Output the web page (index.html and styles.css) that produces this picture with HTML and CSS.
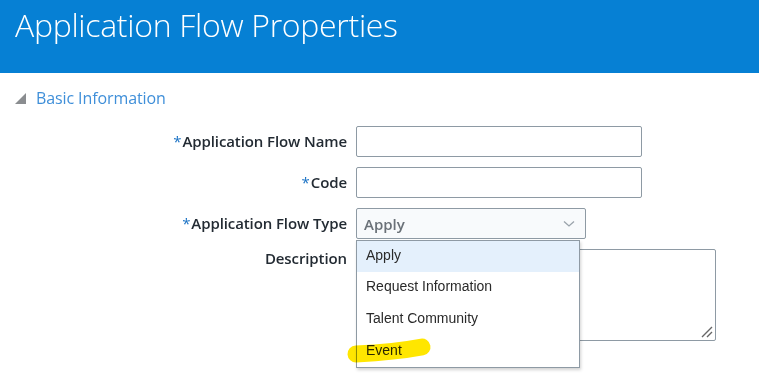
FILE: index.html
```html
<!DOCTYPE html>
<html>
<head>
<meta charset="utf-8">
<link rel="stylesheet" href="styles.css">
</head>
<body>
<header class="banner">
  <h1 class="title">Application Flow Properties</h1>
</header>
<section class="section">
  <div class="section-head">
    <span class="disclosure"></span>
    <span class="section-title">Basic Information</span>
  </div>
  <div class="form">
    <label class="label"><span class="req">*</span>Application Flow Name</label>
    <div class="field"><div class="input wide"></div></div>

    <label class="label"><span class="req">*</span>Code</label>
    <div class="field"><div class="input wide"></div></div>

    <label class="label"><span class="req">*</span>Application Flow Type</label>
    <div class="field select-wrap">
      <div class="select">
        <span class="select-value">Apply</span>
        <svg class="chev" width="12" height="8" viewBox="0 0 12 8"><path d="M1 1.5 L6 6 L11 1.5" fill="none" stroke="#9aa3ab" stroke-width="1.3"/></svg>
      </div>
      <ul class="menu">
        <li class="item active">Apply</li>
        <li class="item">Request Information</li>
        <li class="item">Talent Community</li>
        <li class="item">Event</li>
      </ul>
      <svg class="marker" width="92" height="34" viewBox="0 0 92 34"><path d="M10 21 C30 20 55 18 76 14" fill="none" stroke="#ffe600" stroke-width="17" stroke-linecap="round"/></svg>
    </div>

    <label class="label desc">Description</label>
    <div class="field">
      <div class="textarea">
        <svg class="grip" width="12" height="12" viewBox="0 0 12 12"><path d="M1 11 L11 1 M6 11 L11 6" stroke="#666" stroke-width="1.4"/></svg>
      </div>
    </div>
  </div>
</section>
</body>
</html>
```
FILE: styles.css
```css
html, body {
  margin: 0;
  padding: 0;
  background: #fff;
}
body {
  width: 759px;
  height: 379px;
  overflow: hidden;
  font-family: "Open Sans", "Noto Sans", sans-serif;
}
.banner {
  background: #0680d4;
  height: 73px;
  padding: 0 0 0 15px;
  box-sizing: border-box;
}
.title {
  margin: 0;
  padding-top: 2px;
  font-family: "Open Sans", sans-serif;
  font-weight: 300;
  font-size: 32px;
  line-height: 46px;
  color: #fff;
  letter-spacing: -0.3px;
}
.section {
  padding: 14px 0 0 15px;
}
.section-head {
  display: flex;
  align-items: center;
  gap: 10px;
  height: 22px;
}
.disclosure {
  width: 0;
  height: 0;
  border-left: 11px solid transparent;
  border-bottom: 11px solid #8a8d90;
  margin-top: 1px;
}
.section-title {
  font-family: "Open Sans", sans-serif;
  font-size: 16px;
  color: #3f8fd9;
  letter-spacing: -0.1px;
}
.form {
  display: grid;
  grid-template-columns: 332px auto;
  column-gap: 9px;
  row-gap: 10px;
  margin-top: 17px;
}
.label {
  text-align: right;
  font-family: "Open Sans", sans-serif;
  font-weight: 600;
  font-size: 15px;
  color: #232b33;
  line-height: 31px;
  height: 31px;
  letter-spacing: -0.1px;
}
.label.desc {
  line-height: 19px;
}
.req {
  color: #1c73c5;
  font-weight: 400;
  margin-right: 1px;
}
.field {
  height: 31px;
}
.input {
  height: 31px;
  box-sizing: border-box;
  border: 1px solid #8e9aa4;
  border-radius: 2px;
  background: #fff;
}
.input.wide {
  width: 286px;
}
.select-wrap {
  position: relative;
}
.select {
  width: 230px;
  height: 31px;
  box-sizing: border-box;
  border: 1px solid #8e9aa4;
  border-radius: 2px;
  background: #f8fafc;
  display: flex;
  align-items: center;
  justify-content: space-between;
  padding: 0 10px 0 7px;
}
.select-value {
  font-family: "Open Sans", sans-serif;
  font-weight: 600;
  font-size: 15px;
  color: #6a7178;
}
.chev {
  display: block;
  margin-top: 1px;
}
.menu {
  position: absolute;
  left: 0;
  top: 32px;
  width: 224px;
  height: 128px;
  box-sizing: border-box;
  margin: 0;
  padding: 0;
  list-style: none;
  background: #fff;
  border: 1px solid #8e9aa4;
  box-shadow: 1px 2px 3px rgba(0,0,0,0.18);
  z-index: 1;
}
.item {
  height: 32px;
  line-height: 29px;
  padding-left: 9px;
  font-family: "Liberation Sans", Arial, sans-serif;
  font-size: 14px;
  color: #2a2a2a;
}
.item.active {
  background: #e4f0fc;
  height: 31px;
}
.marker {
  position: absolute;
  left: -10px;
  top: 125px;
  z-index: 2;
  mix-blend-mode: multiply;
}
.textarea {
  position: relative;
  width: 360px;
  height: 92px;
  box-sizing: border-box;
  border: 1px solid #8e9aa4;
  border-radius: 2px;
  background: #fff;
}
.grip {
  position: absolute;
  right: 2px;
  bottom: 2px;
}
```
